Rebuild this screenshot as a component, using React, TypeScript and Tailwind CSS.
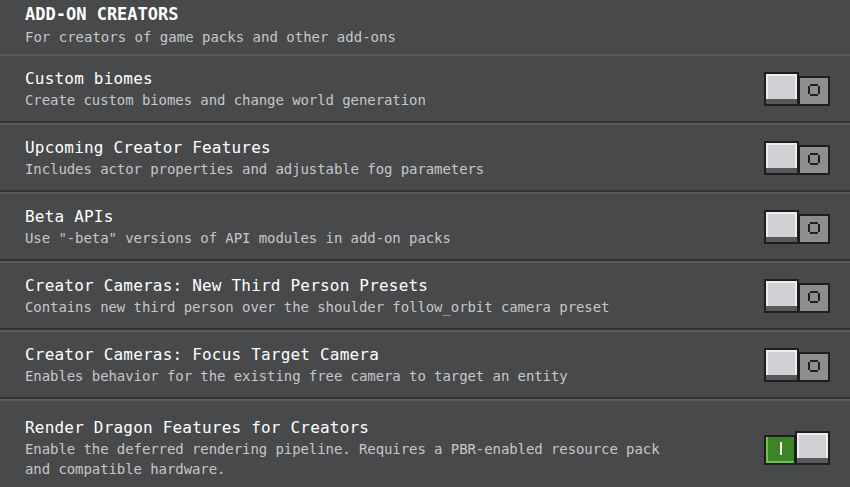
import React from 'react';

type Setting = {
  title: string;
  description: string;
  enabled: boolean;
};

const settings: Setting[] = [
  { title: 'Custom biomes', description: 'Create custom biomes and change world generation', enabled: false },
  { title: 'Upcoming Creator Features', description: 'Includes actor properties and adjustable fog parameters', enabled: false },
  { title: 'Beta APIs', description: 'Use "-beta" versions of API modules in add-on packs', enabled: false },
  { title: 'Creator Cameras: New Third Person Presets', description: 'Contains new third person over the shoulder follow_orbit camera preset', enabled: false },
  { title: 'Creator Cameras: Focus Target Camera', description: 'Enables behavior for the existing free camera to target an entity', enabled: false },
  {
    title: 'Render Dragon Features for Creators',
    description: 'Enable the deferred rendering pipeline. Requires a PBR-enabled resource pack and compatible hardware.',
    enabled: true,
  },
];

const Knob: React.FC = () => (
  <div className="relative z-10 w-[35px] h-[34px] border-2 border-[#1e1e1f] flex flex-col">
    <div className="flex-1 bg-[#d0d1d4] border-2 border-b-0 border-[#ededee]" />
    <div className="h-[5px] bg-[#58585a]" />
  </div>
);

const Toggle: React.FC<{ on: boolean }> = ({ on }) => {
  if (on) {
    return (
      <div className="flex items-end w-[66px] shrink-0">
        <div className="w-[32px] h-[30px] border-2 border-[#1e1e1f] bg-[#3c8527] flex">
          <div className="flex-1 flex items-center justify-center border-l-2 border-b-2 border-[#6cc349]">
            <div className="w-[2px] h-[13px] bg-white" />
          </div>
        </div>
        <div className="-ml-[1px]">
          <Knob />
        </div>
      </div>
    );
  }
  return (
    <div className="flex items-end w-[66px] shrink-0">
      <Knob />
      <div className="-ml-[1px] w-[32px] h-[30px] border-2 border-[#1e1e1f] bg-[#8d8e90] flex items-center justify-center">
        <svg width="12" height="12" viewBox="0 0 12 12" className="mb-[1px]">
          <path d="M2 0h8v2H2zM2 10h8v2H2zM0 2h2v8H0zM10 2h2v8h-2z" fill="#1e1e1f" />
        </svg>
      </div>
    </div>
  );
};

export default function App() {
  return (
    <div
      className="w-[850px] h-[487px] overflow-hidden bg-[#48494a]"
      style={{ fontFamily: '"DejaVu Sans Mono", "Liberation Mono", monospace' }}
    >
      <div className="h-[54px] pl-[25px] pt-[3px]">
        <h2 className="text-[17px] leading-[22px] font-bold text-white">ADD-ON CREATORS</h2>
        <p className="text-[14px] leading-[24px] text-[#c6c7c9]">For creators of game packs and other add-ons</p>
      </div>

      {settings.map((s, i) => (
        <div
          key={s.title}
          className={
            'flex items-center justify-between pl-[25px] pr-[20px] border-t-2 border-b-2 border-t-[#5a5b5c] border-b-[#313233] ' +
            (i === settings.length - 1 ? 'h-[92px] pt-[5px]' : 'h-[69px]')
          }
        >
          <div className="max-w-[660px]">
            <div className="text-[16px] leading-[22px] tracking-[0.2px] text-white">{s.title}</div>
            <div className="text-[14px] leading-[20px] tracking-[-0.08px] text-[#c6c7c9]">{s.description}</div>
          </div>
          <Toggle on={s.enabled} />
        </div>
      ))}
    </div>
  );
}
